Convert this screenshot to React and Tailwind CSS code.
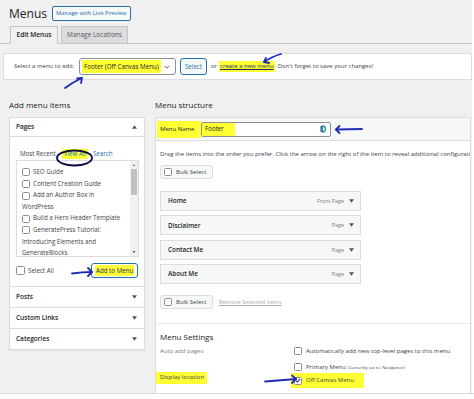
import React from "react";

const Box = ({ checked = false, className = "" }) => (
  <span
    className={
      "inline-flex items-center justify-center w-[8px] h-[8px] border border-[#8c8f94] rounded-[1.5px] bg-white shrink-0 align-middle " +
      className
    }
  >
    {checked && (
      <svg width="7" height="7" viewBox="0 0 10 10">
        <path d="M1.5 5.2 L4 7.6 L8.6 2.2" fill="none" stroke="#1d2f6b" strokeWidth="1.8" />
      </svg>
    )}
  </span>
);

const CaretDown = () => (
  <svg width="5" height="4" viewBox="0 0 6 4">
    <path d="M0 0 L6 0 L3 4 Z" fill="#50575e" />
  </svg>
);

const CaretUp = () => (
  <svg width="5" height="4" viewBox="0 0 6 4">
    <path d="M0 4 L6 4 L3 0 Z" fill="#50575e" />
  </svg>
);

const MenuItem = ({ title, type }) => (
  <div className="w-[201px] h-[20px] border border-[#dcdcde] bg-[#f6f7f7] flex items-center justify-between pl-[7px] pr-[6px]">
    <span className="text-[6.4px] font-semibold text-[#1d2327]">{title}</span>
    <span className="flex items-center gap-[5px]">
      <span className="text-[5.4px] text-[#787c82]">{type}</span>
      <CaretDown />
    </span>
  </div>
);

const Accordion = ({ label }) => (
  <div className="h-[21px] flex items-center justify-between pl-[6px] pr-[7px] border-t border-[#dcdcde]">
    <span className="text-[6.5px] font-semibold text-[#1d2327]">{label}</span>
    <CaretDown />
  </div>
);

export default function App() {
  const Y = "bg-[#ffff33]";
  return (
    <div
      className="relative w-[474px] h-[399px] overflow-hidden bg-white text-[#3c434a]"
      style={{ fontFamily: '"Open Sans", "Noto Sans", sans-serif' }}
    >
      <div className="w-[472px] h-[393px] bg-[#f0f0f1] flex flex-col overflow-hidden">
        {/* Title row */}
        <div className="flex items-center h-[15px] mt-[6px] pl-[9px]">
          <span className="text-[12px] leading-none text-[#1d2327]">Menus</span>
          <span className="ml-[5px] h-[15px] px-[3px] flex items-center border border-[#2271b1] rounded-[2px] bg-[#f6f7f7] text-[#2271b1] text-[5.9px] whitespace-nowrap">
            Manage with Live Preview
          </span>
        </div>

        {/* Tabs */}
        <div className="mt-[5px] h-[18px] border-b border-[#c3c4c7] pl-[10px] flex items-end gap-[3px]">
          <div className="w-[48px] h-[18px] -mb-px border border-[#c3c4c7] border-b-[#f0f0f1] bg-[#f0f0f1] flex items-center justify-center text-[6.5px] font-semibold text-[#1d2327] whitespace-nowrap">
            Edit Menus
          </div>
          <div className="w-[67px] h-[17px] border border-[#c3c4c7] border-b-0 bg-[#dcdcde] flex items-center justify-center text-[6.5px] text-[#50575e] whitespace-nowrap">
            Manage Locations
          </div>
        </div>

        {/* Select bar */}
        <div className="mt-[9px] ml-[3px] w-[469px] h-[27px] bg-white border border-[#dcdcde] flex items-center pl-[10px] text-[6px] whitespace-nowrap">
          <span className="w-[65px] text-[#3c434a]">Select a menu to edit:</span>
          <span className="w-[97px] h-[17px] border border-[#8c8f94] rounded-[3px] flex items-center justify-between pl-[2px] pr-[5px]">
            <span className={Y + " h-[13px] flex items-center px-[2px] text-[6.3px] text-[#1d2327]"}>
              Footer (Off Canvas Menu)
            </span>
            <svg width="6" height="4" viewBox="0 0 8 5">
              <path d="M1 1 L4 4 L7 1" fill="none" stroke="#50575e" strokeWidth="1.2" />
            </svg>
          </span>
          <span className="ml-[4px] w-[27px] h-[17px] border border-[#2271b1] rounded-[3px] bg-[#f6f7f7] text-[#2271b1] flex items-center justify-center text-[6.2px]">
            Select
          </span>
          <span className="ml-[4px]">or</span>
          <span className={Y + " ml-[2px] px-[1px] h-[11px] flex items-center underline text-[#1d2b5a]"}>
            create a new menu
          </span>
          <span>. Don't forget to save your changes!</span>
        </div>

        {/* Columns */}
        <div className="flex flex-1 min-h-0">
          {/* Left column */}
          <div className="ml-[8px] w-[138px] flex flex-col">
            <div className="h-[37px] pt-[19px] text-[8px] leading-[12px] text-[#1d2327] whitespace-nowrap pl-[1px]">
              Add menu items
            </div>
            <div className="ml-[1px] w-[136px] h-[233px] bg-white border border-[#dcdcde] shadow-[0_1px_1px_rgba(0,0,0,0.04)] flex flex-col">
              <div className="h-[21px] flex items-center justify-between pl-[6px] pr-[7px]">
                <span className="text-[6.5px] font-semibold text-[#1d2327]">Pages</span>
                <CaretUp />
              </div>
              <div className="border-t border-[#dcdcde] pl-[6px] pr-[5px] pt-[11px]">
                <div className="h-[12px] flex items-center text-[6.2px] pl-[4px] whitespace-nowrap">
                  <span className="text-[#3c434a]">Most Recent</span>
                  <span className={Y + " ml-[6px] px-[2px] text-[#2271b1]"}>View All</span>
                  <span className="ml-[5px] text-[#2271b1]">Search</span>
                </div>
                <div className="h-[97px] border border-[#dcdcde] flex">
                  <div className="flex-1 pl-[5px] pt-[5px] text-[6.2px] leading-[11.6px] text-[#3c434a] whitespace-nowrap overflow-hidden">
                    <div><Box className="mr-[3px]" />SEO Guide</div>
                    <div><Box className="mr-[3px]" />Content Creation Guide</div>
                    <div><Box className="mr-[3px]" />Add an Author Box in</div>
                    <div>WordPress</div>
                    <div><Box className="mr-[3px]" />Build a Hero Header Template</div>
                    <div><Box className="mr-[3px]" />GeneratePress Tutorial:</div>
                    <div>Introducing Elements and</div>
                    <div>GenerateBlocks</div>
                  </div>
                  <div className="w-[8px] bg-[#f1f1f1] flex flex-col items-center">
                    <svg width="6" height="6" viewBox="0 0 6 6" className="mt-[1px]">
                      <path d="M1.5 4 L4.5 4 L3 2 Z" fill="#8a8a8a" />
                    </svg>
                    <div className="w-[6px] h-[26px] bg-[#c1c1c1] mt-[1px]" />
                    <div className="flex-1" />
                    <svg width="6" height="6" viewBox="0 0 6 6" className="mb-[1px]">
                      <path d="M1.5 2 L4.5 2 L3 4 Z" fill="#505050" />
                    </svg>
                  </div>
                </div>
                <div className="mt-[6px] h-[15px] flex items-center justify-between pr-[1px]">
                  <span className="flex items-center text-[6.2px]">
                    <Box className="w-[9px] h-[9px]" />
                    <span className="ml-[3px]">Select All</span>
                  </span>
                  <span className="w-[47px] h-[15px] border border-[#2271b1] rounded-[3px] bg-white flex items-center pl-[3px] overflow-hidden">
                    <span className={Y + " h-[11px] flex items-center px-[1px] text-[6.2px] text-[#1d2b5a] whitespace-nowrap"}>
                      Add to Menu
                    </span>
                  </span>
                </div>
              </div>
              <div className="mt-[8px]">
                <Accordion label="Posts" />
                <Accordion label="Custom Links" />
                <Accordion label="Categories" />
              </div>
            </div>
          </div>

          {/* Right column */}
          <div className="ml-[9px] w-[316px] flex flex-col">
            <div className="h-[37px] pt-[19px] text-[8px] leading-[12px] text-[#1d2327] whitespace-nowrap">
              Menu structure
            </div>
            <div className="flex-1 bg-white border border-[#dcdcde] border-b-0 flex flex-col overflow-hidden">
              <div className="h-[23px] shrink-0 bg-[#f6f7f7] border-b border-[#dcdcde] flex items-center pl-[1px]">
                <span className={Y + " h-[17px] w-[44px] flex items-center pl-[3px] text-[6px] text-[#1d2327] whitespace-nowrap"}>
                  Menu Name
                </span>
                <span className="w-[130px] h-[15px] border border-[#8c8f94] rounded-[2px] bg-white flex items-center justify-between pr-[3px] overflow-hidden">
                  <span className={Y + " h-full w-[33px] flex items-center pl-[3px] text-[6.2px] text-[#1d2327]"}>
                    Footer
                  </span>
                  <svg width="7" height="8" viewBox="0 0 7 8">
                    <rect x="0.5" y="1" width="1.3" height="6" fill="#1d4f91" />
                    <path d="M2.6 1 C6.4 1 6.4 7 2.6 7 Z" fill="none" stroke="#2d8f8a" strokeWidth="1.3" />
                  </svg>
                </span>
              </div>

              <div className="pl-[4px] flex flex-col">
                <div className="pt-[9px] leading-[8px] text-[6px] text-[#3c434a] whitespace-nowrap">
                  Drag the items into the order you prefer. Click the arrow on the right of the item to reveal additional configuration options.
                </div>
                <div className="mt-[7px] w-[53px] h-[14px] border border-[#dcdcde] rounded-[3px] bg-[#f6f7f7] flex items-center pl-[3px] text-[6px] whitespace-nowrap">
                  <Box />
                  <span className="ml-[4px]">Bulk Select</span>
                </div>
                <div className="mt-[12px] flex flex-col gap-[4.4px]">
                  <MenuItem title="Home" type="Front Page" />
                  <MenuItem title="Disclaimer" type="Page" />
                  <MenuItem title="Contact Me" type="Page" />
                  <MenuItem title="About Me" type="Page" />
                </div>
                <div className="mt-[11px] flex items-center">
                  <div className="w-[53px] h-[14px] border border-[#dcdcde] rounded-[3px] bg-[#f6f7f7] flex items-center pl-[3px] text-[6px] whitespace-nowrap">
                    <Box />
                    <span className="ml-[4px]">Bulk Select</span>
                  </div>
                  <span className="ml-[6px] text-[5.8px] text-[#a3aab3] underline whitespace-nowrap">
                    Remove Selected Items
                  </span>
                </div>
              </div>

              <div className="mt-[14px] border-t border-[#ececed] pl-[4px]">
                <div className="pt-[8px] leading-[10px] text-[8px] text-[#1d2327] whitespace-nowrap">
                  Menu Settings
                </div>
                <div className="mt-[4px] h-[10px] flex items-center">
                  <span className="w-[134px] text-[6px] text-[#787c82]">Auto add pages</span>
                  <Box />
                  <span className="ml-[4px] text-[6px] whitespace-nowrap">
                    Automatically add new top-level pages to this menu
                  </span>
                </div>
                <div className="mt-[5px] flex items-start">
                  <div className="w-[134px]">
                    <span className={Y + " -ml-[4px] pl-[4px] pr-[3px] h-[12px] inline-flex items-center text-[6px] text-[#3c434a] whitespace-nowrap"}>
                      Display location
                    </span>
                  </div>
                  <div className="flex flex-col">
                    <div className="h-[12px] flex items-center whitespace-nowrap">
                      <Box />
                      <span className="ml-[4px] text-[6px]">Primary Menu</span>
                      <span className="ml-[2px] text-[4.3px]">(Currently set to: Navigation)</span>
                    </div>
                    <div className={Y + " -ml-[3px] pl-[3px] w-[73px] h-[15px] flex items-center whitespace-nowrap"}>
                      <Box checked />
                      <span className="ml-[4px] text-[6px]">Off Canvas Menu</span>
                    </div>
                  </div>
                </div>
              </div>
            </div>
          </div>
        </div>
      </div>
      <div className="h-[6px] border-t border-[#dcdcde] bg-white" />

      {/* Annotations */}
      <svg
        className="absolute inset-0 pointer-events-none"
        width="474"
        height="399"
        viewBox="0 0 474 399"
      >
        <g fill="none" stroke="#1f2bb8" strokeWidth="1.8" strokeLinecap="round" strokeLinejoin="round">
          <path d="M65 88 Q73 82 82 78" />
          <path d="M77 78.5 L82 78 L81 83" />
          <path d="M281 54 Q271 57 264 62" />
          <path d="M269 63 L264 62 L266 58" />
          <path d="M72 273.5 Q82 272 92 272" />
          <path d="M88 268 L92 272 L88 276" />
          <path d="M362 129 L336 129.5" />
          <path d="M339.5 126 L336 129.5 L339.5 133" />
          <path d="M265 381.5 Q281 380 296 379" />
          <path d="M292 375.5 L296 379 L292 383" />
        </g>
        <ellipse cx="74.5" cy="158" rx="17.5" ry="7.5" fill="none" stroke="#0b0b45" strokeWidth="1.8" />
      </svg>
    </div>
  );
}
